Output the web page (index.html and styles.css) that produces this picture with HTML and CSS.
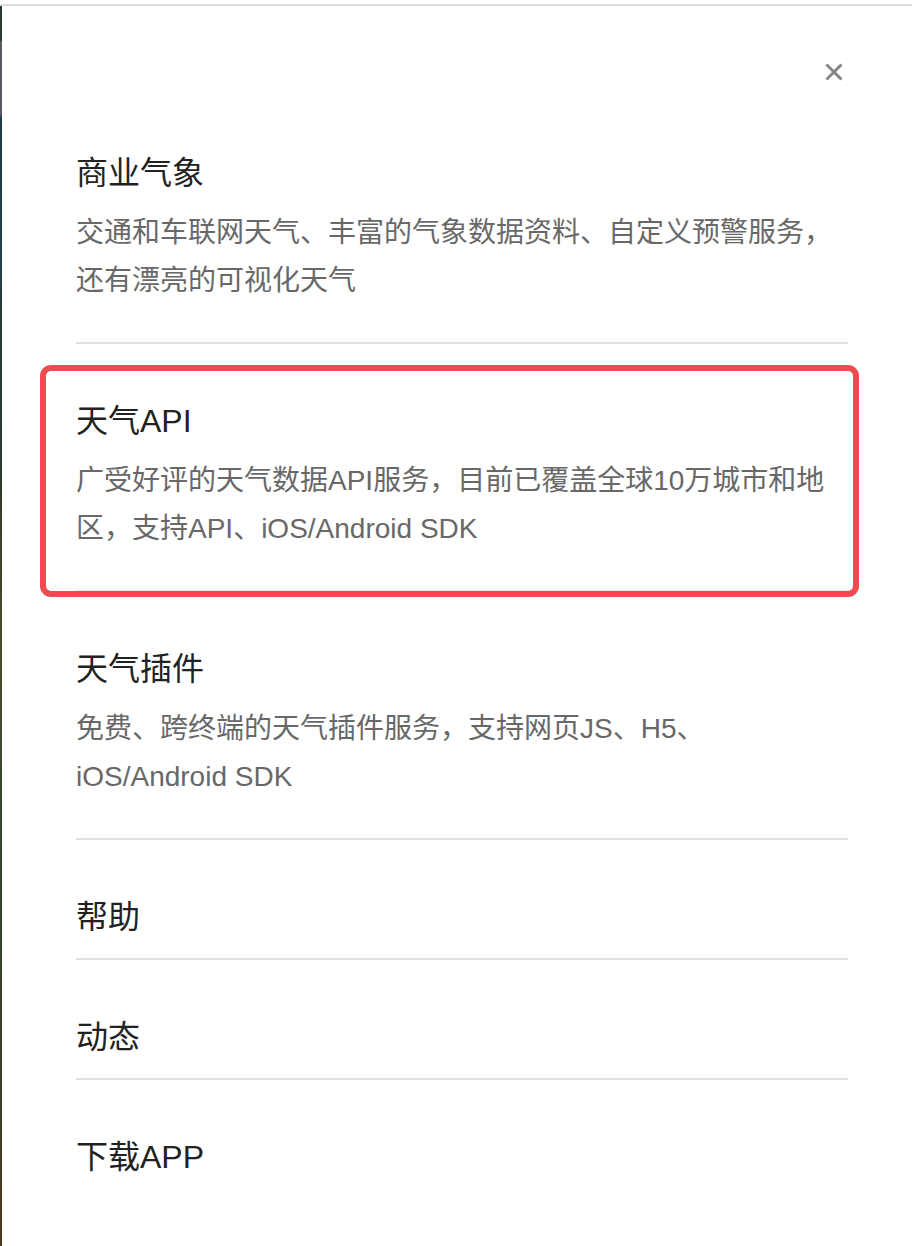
FILE: index.html
```html
<!DOCTYPE html>
<html lang="zh-CN">
<head>
<meta charset="utf-8">
<title>菜单</title>
<link rel="stylesheet" href="styles.css">
</head>
<body>
<div class="topline"></div>
<div class="wrap">
  <div class="edge"></div>
  <nav class="panel">
    <div class="header">
      <button class="close" aria-label="关闭">
        <svg viewBox="0 0 24 24" width="24" height="24"><path d="M4.5 4.5 L19.5 19.5 M19.5 4.5 L4.5 19.5" stroke="#858585" stroke-width="2.9" stroke-linecap="butt" fill="none"/></svg>
      </button>
    </div>
    <div class="item first">
      <div class="title">商业气象</div>
      <div class="desc">交通和车联网天气、丰富的气象数据资料、自定义预警服务，还有漂亮的可视化天气</div>
    </div>
    <div class="item selected">
      <div class="title">天气API</div>
      <div class="desc">广受好评的天气数据API服务，目前已覆盖全球10万城市和地区，支持API、iOS/Android SDK</div>
      <div class="highlight"></div>
    </div>
    <div class="item">
      <div class="title">天气插件</div>
      <div class="desc">免费、跨终端的天气插件服务，支持网页JS、H5、<br>iOS/Android SDK</div>
    </div>
    <div class="item simple">
      <div class="title">帮助</div>
    </div>
    <div class="item simple">
      <div class="title">动态</div>
    </div>
    <div class="item simple last">
      <div class="title">下载APP</div>
    </div>
  </nav>
</div>
</body>
</html>
```
FILE: styles.css
```css
html, body {
  margin: 0;
  padding: 0;
  background: #ffffff;
}
body {
  font-family: "Liberation Sans", "Noto Sans CJK SC", sans-serif;
  overflow: hidden;
}
.topline {
  margin-top: 4px;
  height: 2px;
  background: #dcdcdc;
}
.wrap {
  display: flex;
  min-height: 1240px;
}
.edge {
  width: 2px;
  flex: none;
  background: linear-gradient(to bottom,
    #2b3a2c 0px, #2b3a2c 34px,
    #5b5a62 36px, #5b5a62 108px,
    #1e3f49 112px, #244048 260px,
    #2a3c34 330px, #2d3a2e 470px,
    #3a3f2c 520px, #4b4a2a 640px,
    #3e4a30 720px, #33422f 900px,
    #37402c 1000px, #3f3c26 1120px,
    #4a3b20 1240px);
}
.panel {
  flex: 1;
  padding: 0 64px 0 74px;
  background: #ffffff;
}
.header {
  display: flex;
  justify-content: flex-end;
  padding-top: 54px;
  margin-right: 2px;
}
.close {
  width: 24px;
  height: 24px;
  padding: 0;
  border: 0;
  background: transparent;
  display: flex;
}
.item {
  position: relative;
  padding: 55px 0 37px;
  border-bottom: 2px solid #e3e3e3;
}
.item.first {
  padding-top: 67px;
}
.title {
  font-size: 32px;
  line-height: 44px;
  color: #222222;
}
.desc {
  margin-top: 14px;
  font-size: 28px;
  line-height: 48px;
  color: #686868;
}
.simple {
  padding: 55px 0 19px;
}
.last {
  border-bottom: 0;
}
.highlight {
  position: absolute;
  left: -36px;
  right: -11px;
  top: 21px;
  bottom: -7px;
  border: 6px solid #ed4b50;
  border-radius: 11px;
  pointer-events: none;
}
```
